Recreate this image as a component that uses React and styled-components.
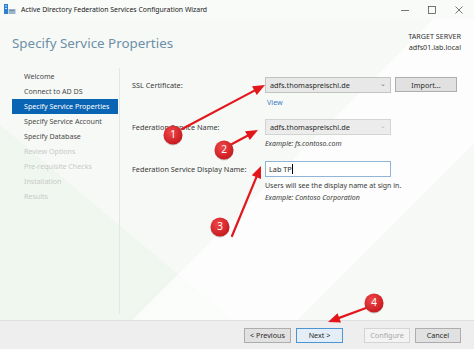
import React from 'react';
import styled, { createGlobalStyle } from 'styled-components';

const GlobalStyle = createGlobalStyle`
  html, body { margin: 0; padding: 0; background: #f6f9f6; }
  body { font-family: "Noto Sans", "Open Sans", sans-serif; }
`;

const steps = [
  { name: 'Welcome', state: 'done' },
  { name: 'Connect to AD DS', state: 'done' },
  { name: 'Specify Service Properties', state: 'active' },
  { name: 'Specify Service Account', state: 'done' },
  { name: 'Specify Database', state: 'done' },
  { name: 'Review Options', state: 'todo' },
  { name: 'Pre-requisite Checks', state: 'todo' },
  { name: 'Installation', state: 'todo' },
  { name: 'Results', state: 'todo' },
];

// rote Markierungen (Pfeile + Nummern)
const marks = [
  { n: 1, c: [173, 135], from: [182, 129], to: [265, 85] },
  { n: 2, c: [224, 150], from: [232, 144], to: [258, 130] },
  { n: 3, c: [220, 227], from: [232, 236], to: [261, 166] },
  { n: 4, c: [374, 303], from: [366, 308], to: [328, 322] },
];

const Arrow = ({ from, to }) => {
  const [x1, y1] = from;
  const [x2, y2] = to;
  const a = Math.atan2(y2 - y1, x2 - x1);
  const len = 12;
  const w = 5;
  const bx = x2 - Math.cos(a) * len;
  const by = y2 - Math.sin(a) * len;
  const px = -Math.sin(a) * w;
  const py = Math.cos(a) * w;
  return (
    <g>
      <line x1={x1} y1={y1} x2={bx} y2={by} stroke="#e3171b" strokeWidth="2.2" strokeLinecap="round" />
      <polygon points={`${x2},${y2} ${bx + px},${by + py} ${bx - px},${by - py}`} fill="#e3171b" />
    </g>
  );
};

const App = () => (
  <>
    <GlobalStyle />
    <Window>
      <TitleBar>
        <TitleIcon width="12" height="11" viewBox="0 0 12 11">
          <rect x="0" y="0" width="4" height="10" fill="#2f7fd0" />
          <rect x="1" y="1.5" width="2" height="1" fill="#bfe0ff" />
          <rect x="1" y="4" width="2" height="1" fill="#bfe0ff" />
          <rect x="4.5" y="5" width="7" height="5" fill="#9ab4cc" />
          <rect x="5.5" y="6" width="5" height="1" fill="#6f8aa3" />
        </TitleIcon>
        <TitleText>Active Directory Federation Services Configuration Wizard</TitleText>
        <WinControls>
          <WinButton>
            <svg width="8" height="8" viewBox="0 0 8 8"><line x1="0" y1="4.5" x2="8" y2="4.5" stroke="#555" strokeWidth="0.8" /></svg>
          </WinButton>
          <WinButton>
            <svg width="8" height="8" viewBox="0 0 8 8"><rect x="0.5" y="0.5" width="7" height="7" fill="none" stroke="#555" strokeWidth="0.8" /></svg>
          </WinButton>
          <WinButton>
            <svg width="8" height="8" viewBox="0 0 8 8"><path d="M0.5 0.5 L7.5 7.5 M7.5 0.5 L0.5 7.5" stroke="#555" strokeWidth="0.8" /></svg>
          </WinButton>
        </WinControls>
      </TitleBar>

      <Header>
        <Heading>Specify Service Properties</Heading>
        <Target>
          <div>TARGET SERVER</div>
          <div>adfs01.lab.local</div>
        </Target>
      </Header>

      <Body>
        <Nav>
          {steps.map((s) => (
            <NavItem key={s.name} $state={s.state}>{s.name}</NavItem>
          ))}
        </Nav>

        <Content>
          <Row>
            <Label>SSL Certificate:</Label>
            <Field>
              <Line>
                <Select>
                  <span>adfs.thomaspreischl.de</span>
                  <Caret>⌄</Caret>
                </Select>
                <Button $w={62}>Import...</Button>
              </Line>
              <Link>View</Link>
            </Field>
          </Row>
          <Row>
            <Label>Federation Service Name:</Label>
            <Field>
              <Select $disabled>
                <span>adfs.thomaspreischl.de</span>
                <Caret $disabled>⌄</Caret>
              </Select>
              <Hint $italic>Example: fs.contoso.com</Hint>
            </Field>
          </Row>
          <Row>
            <Label>Federation Service Display Name:</Label>
            <Field>
              <Input>Lab TP<Cursor /></Input>
              <Hint>Users will see the display name at sign in.</Hint>
              <Hint $italic>Example: Contoso Corporation</Hint>
            </Field>
          </Row>
        </Content>
      </Body>

      <Footer>
        <Button $w={47}>&lt; Previous</Button>
        <Button $w={47} $primary>Next &gt;</Button>
        <Button $w={46} $disabled $gap={21}>Configure</Button>
        <Button $w={46}>Cancel</Button>
      </Footer>

      <Overlay width="474" height="349" viewBox="0 0 474 349">
        <defs>
          <radialGradient id="dot" cx="40%" cy="35%" r="70%">
            <stop offset="0%" stopColor="#f0494a" />
            <stop offset="100%" stopColor="#c5161c" />
          </radialGradient>
        </defs>
        {marks.map((m) => (
          <Arrow key={'a' + m.n} from={m.from} to={m.to} />
        ))}
        {marks.map((m) => (
          <g key={'c' + m.n}>
            <circle cx={m.c[0]} cy={m.c[1] + 1} r="9.5" fill="rgba(0,0,0,0.18)" />
            <circle cx={m.c[0]} cy={m.c[1]} r="9.5" fill="url(#dot)" />
            <text x={m.c[0]} y={m.c[1] + 3.3} textAnchor="middle" fontSize="10" fill="#fff" fontFamily="Noto Sans, sans-serif">{m.n}</text>
          </g>
        ))}
      </Overlay>
    </Window>
  </>
);

const Window = styled.div`
  position: relative;
  width: 474px;
  height: 349px;
  display: flex;
  flex-direction: column;
  overflow: hidden;
  background:
    linear-gradient(135deg, rgba(255,255,255,0) 55%, rgba(255,255,255,0.7) 55%, rgba(255,255,255,0.7) 75%, rgba(255,255,255,0) 75%),
    linear-gradient(40deg, rgba(235,245,235,0.6) 30%, rgba(255,255,255,0) 30%),
    #f6f9f6;
  color: #3a3a3a;
  font-size: 7.3px;
`;

const TitleBar = styled.div`
  height: 19px;
  display: flex;
  align-items: center;
  padding-left: 4px;
  background: #f9fbf9;
`;

const TitleIcon = styled.svg`
  flex: none;
  margin-right: 5px;
`;

const TitleText = styled.div`
  font-size: 6.9px;
  color: #1a1a1a;
  flex: 1;
`;

const WinControls = styled.div`
  display: flex;
  margin-right: 2px;
`;

const WinButton = styled.div`
  width: 27px;
  height: 19px;
  display: flex;
  align-items: center;
  justify-content: center;
`;

const Header = styled.div`
  height: 49px;
  display: flex;
  justify-content: space-between;
  align-items: flex-start;
  padding: 0 13px 0 12px;
`;

const Heading = styled.h1`
  margin: 15px 0 0;
  font-size: 13.4px;
  font-weight: 400;
  color: #6d8fa8;
`;

const Target = styled.div`
  margin-top: 12px;
  text-align: right;
  font-size: 7.2px;
  line-height: 11px;
  color: #333;
`;

const Body = styled.div`
  flex: 1;
  display: flex;
  min-height: 0;
`;

const Nav = styled.div`
  width: 120px;
  border-right: 1px solid #e3e6e3;
  margin-bottom: 6px;
  padding: 1px 0 0 12px;
  box-sizing: border-box;
`;

const NavItem = styled.div`
  height: 15px;
  line-height: 15px;
  padding-left: 12px;
  width: 106px;
  box-sizing: border-box;
  font-size: 7.1px;
  white-space: nowrap;
  background: ${(p) => (p.$state === 'active' ? '#0a64b4' : 'transparent')};
  color: ${(p) => (p.$state === 'active' ? '#fff' : p.$state === 'todo' ? '#c8cac8' : '#4a4a4a')};
`;

const Content = styled.div`
  flex: 1;
  padding: 9px 0 0 12px;
`;

const Row = styled.div`
  display: grid;
  grid-template-columns: 133px 1fr;
  margin-bottom: 11px;
`;

const Label = styled.div`
  height: 16px;
  line-height: 16px;
  font-size: 7.3px;
`;

const Field = styled.div`
  display: flex;
  flex-direction: column;
`;

const Line = styled.div`
  display: flex;
  gap: 4px;
`;

const Select = styled.div`
  width: 126px;
  height: 16px;
  box-sizing: border-box;
  border: 1px solid ${(p) => (p.$disabled ? '#d3d5d3' : '#c2c4c2')};
  background: ${(p) => (p.$disabled ? '#ececec' : '#e7e8e7')};
  display: flex;
  align-items: center;
  justify-content: space-between;
  padding: 0 4px 0 4px;
  font-size: 7.3px;
  color: #2a2a2a;
`;

const Caret = styled.span`
  font-size: 7px;
  line-height: 7px;
  margin-top: -4px;
  color: ${(p) => (p.$disabled ? '#bbb' : '#777')};
`;

const Input = styled.div`
  width: 126px;
  height: 16px;
  box-sizing: border-box;
  border: 1px solid #8fb6d8;
  background: #fff;
  display: flex;
  align-items: center;
  padding: 0 3px;
  font-size: 7.3px;
  color: #2a2a2a;
`;

const Cursor = styled.span`
  width: 1px;
  height: 10px;
  background: #000;
`;

const Link = styled.div`
  height: 12px;
  line-height: 12px;
  margin-top: 3px;
  padding-left: 2px;
  font-size: 7.2px;
  color: #3b7fc4;
`;

const Hint = styled.div`
  height: 12px;
  line-height: 12px;
  margin-top: 3px;
  font-size: 7px;
  font-style: ${(p) => (p.$italic ? 'italic' : 'normal')};
  & + & { margin-top: 0; }
`;

const Footer = styled.div`
  height: 28px;
  flex: none;
  border-top: 1px solid #e0e0e0;
  background: #eeeeee;
  display: flex;
  align-items: center;
  justify-content: flex-end;
  gap: 5px;
  padding-right: 13px;
`;

const Button = styled.div`
  width: ${(p) => p.$w}px;
  height: 15px;
  box-sizing: border-box;
  margin-left: ${(p) => (p.$gap ? p.$gap - 5 : 0)}px;
  display: flex;
  align-items: center;
  justify-content: center;
  font-size: 7.2px;
  border: 1px solid ${(p) => (p.$primary ? '#4d94d4' : p.$disabled ? '#d4d4d4' : '#adadad')};
  background: ${(p) => (p.$primary ? '#e3eef8' : p.$disabled ? '#f3f3f3' : '#e1e1e1')};
  color: ${(p) => (p.$disabled ? '#a8a8a8' : '#2a2a2a')};
`;

const Overlay = styled.svg`
  position: absolute;
  left: 0;
  top: 0;
  pointer-events: none;
`;

export default App;
